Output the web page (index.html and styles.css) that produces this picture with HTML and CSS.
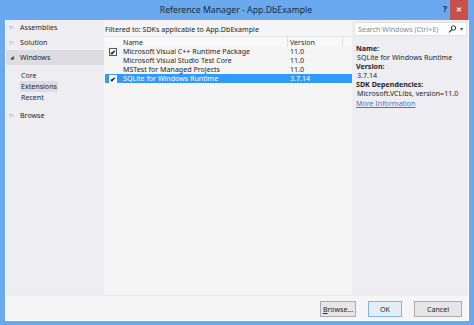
FILE: index.html
```html
<!DOCTYPE html>
<html>
<head>
<meta charset="utf-8">
<link rel="stylesheet" href="styles.css">
</head>
<body>
<div class="window">
  <div class="titlebar">
    <div class="title">Reference Manager - App.DbExample</div>
    <div class="help">?</div>
    <div class="close">✕</div>
  </div>
  <div class="client">
    <div class="main">
      <div class="nav">
        <div class="nav-item"><span class="tri">▷</span>Assemblies</div>
        <div class="nav-item"><span class="tri">▷</span>Solution</div>
        <div class="nav-item sel"><span class="tri open">◢</span>Windows</div>
        <div class="sub">
          <div class="sub-item">Core</div>
          <div class="sub-item hl">Extensions</div>
          <div class="sub-item">Recent</div>
        </div>
        <div class="nav-item"><span class="tri">▷</span>Browse</div>
      </div>
      <div class="center">
        <div class="filter">Filtered to: SDKs applicable to App.DbExample</div>
        <div class="table">
          <div class="row head"><span class="cb-col"></span><span class="name">Name</span><span class="ver">Version</span><span class="rest"></span></div>
          <div class="row"><span class="cb-col"><span class="cb">✔</span></span><span class="name">Microsoft Visual C++ Runtime Package</span><span class="ver">11.0</span><span class="rest"></span></div>
          <div class="row"><span class="cb-col"></span><span class="name">Microsoft Visual Studio Test Core</span><span class="ver">11.0</span><span class="rest"></span></div>
          <div class="row"><span class="cb-col"></span><span class="name">MSTest for Managed Projects</span><span class="ver">11.0</span><span class="rest"></span></div>
          <div class="row selrow"><span class="cb-col"><span class="cb">✔</span></span><span class="name">SQLite for Windows Runtime</span><span class="ver">3.7.14</span><span class="rest"></span></div>
        </div>
      </div>
      <div class="side">
        <div class="search"><span class="ph">Search Windows (Ctrl+E)</span>
          <svg class="mag" width="9" height="8" viewBox="0 0 9 8"><circle cx="5.5" cy="3" r="2.2" fill="none" stroke="#333" stroke-width="1"/><line x1="3.9" y1="4.6" x2="1" y2="7.4" stroke="#333" stroke-width="1.3"/></svg>
          <span class="drop">▾</span>
        </div>
        <div class="info">
          <div class="lbl">Name:</div>
          <div class="val">SQLite for Windows Runtime</div>
          <div class="lbl">Version:</div>
          <div class="val">3.7.14</div>
          <div class="lbl">SDK Dependencies:</div>
          <div class="val">Microsoft.VCLibs, version=11.0</div>
          <div class="link">More Information</div>
        </div>
      </div>
    </div>
    <div class="footer">
      <div class="btn"><u>B</u>rowse...</div>
      <div class="btn ok">OK</div>
      <div class="btn">Cancel</div>
    </div>
  </div>
</div>
</body>
</html>
```
FILE: styles.css
```css
* { box-sizing: border-box; }
html, body { margin: 0; padding: 0; }
body { width: 474px; height: 325px; overflow: hidden; font-family: "Noto Sans", "Open Sans", sans-serif; font-size: 7.1px; color: #1e1e1e; }
.window { width: 474px; height: 325px; background: #6aa9ee; padding: 0 5px 4px 5px; display: flex; flex-direction: column; }
.titlebar { height: 20px; display: flex; align-items: flex-start; background: #6aa9ee; }
.title { flex: 1; text-align: center; font-size: 8.7px; color: #1a2a40; padding-top: 4px; padding-left: 26px; }
.help { width: 8px; font-weight: bold; color: #1a2a40; font-size: 8.5px; padding-top: 3px; margin-right: 1px; text-align: center; }
.close { width: 18px; height: 20px; margin-right: 1px; background: #c7504a; color: #fff; font-size: 6.5px; font-weight: bold; text-align: center; line-height: 20px; }
.client { flex: 1; background: #f5f5f5; display: flex; flex-direction: column; border: 1px solid #fdfdfd; border-top: none; }
.main { flex: 1; display: flex; }
.nav { width: 98px; background: #eeeef2; }
.nav-item { height: 15px; line-height: 15px; padding-left: 4px; display: flex; align-items: center; color: #1e1e1e; }
.nav-item.sel { background: #dcdce1; }
.tri { font-size: 5px; color: #777; width: 10px; display: inline-block; }
.tri.open { color: #444; }
.sub { padding: 5px 0 5px 15px; }
.sub-item { height: 11px; line-height: 11px; }
.sub-item.hl { background: #dcdce1; display: inline-block; padding: 0 1px; margin-left: -1px; }
.center { width: 248px; padding: 3px 0 0 1px; }
.filter { height: 13px; line-height: 12px; }
.row { display: flex; height: 9px; line-height: 9px; }
.row.head { height: 11px; line-height: 11px; background: #f8f8f8; border-top: 1px solid #e6e6e6; color: #2a2a2a; }
.row.head .ver, .row.head .name { border-right: 1px solid #e0e0e0; }
.cb-col { width: 18px; display: flex; align-items: center; padding-left: 4px; }
.cb { width: 8px; height: 8px; border: 1px solid #555; background: #fff; font-size: 7px; line-height: 7px; text-align: center; color: #111; font-weight: bold; }
.name { width: 165px; }
.ver { width: 55px; padding-left: 2px; }
.rest { flex: 1; }
.selrow { background: #3399ff; color: #fff; }
.selrow .cb { border-color: #fff; }
.side { flex: 1; background: #eeeef2; display: flex; flex-direction: column; }
.search { height: 14px; margin: 2px 1px 0 2px; background: #fff; border: 1px solid #e2e2e6; display: flex; align-items: center; padding-left: 3px; }
.ph { flex: 1; color: #888; }
.mag { margin-right: 3px; }
.drop { font-size: 6px; color: #555; margin-right: 3px; }
.info { padding: 8px 0 0 4px; line-height: 8.9px; }
.lbl { font-weight: bold; color: #1e1e1e; }
.val { padding-left: 1px; }
.link { color: #2f7bd6; text-decoration: underline; margin-top: 2px; }
.footer { height: 25px; display: flex; justify-content: flex-end; align-items: center; gap: 12px; padding-right: 6px; padding-top: 2px; background: #f5f5f5; border-top: 1px solid #ececee; }
.btn { height: 16px; width: 36px; border: 1px solid #acacac; background: #e6e6e6; text-align: center; line-height: 14px; color: #222; }
.btn.ok { width: 34px; border-color: #7eb4ea; background: #e5edf7; }
.btn:last-child { width: 48px; }
```
